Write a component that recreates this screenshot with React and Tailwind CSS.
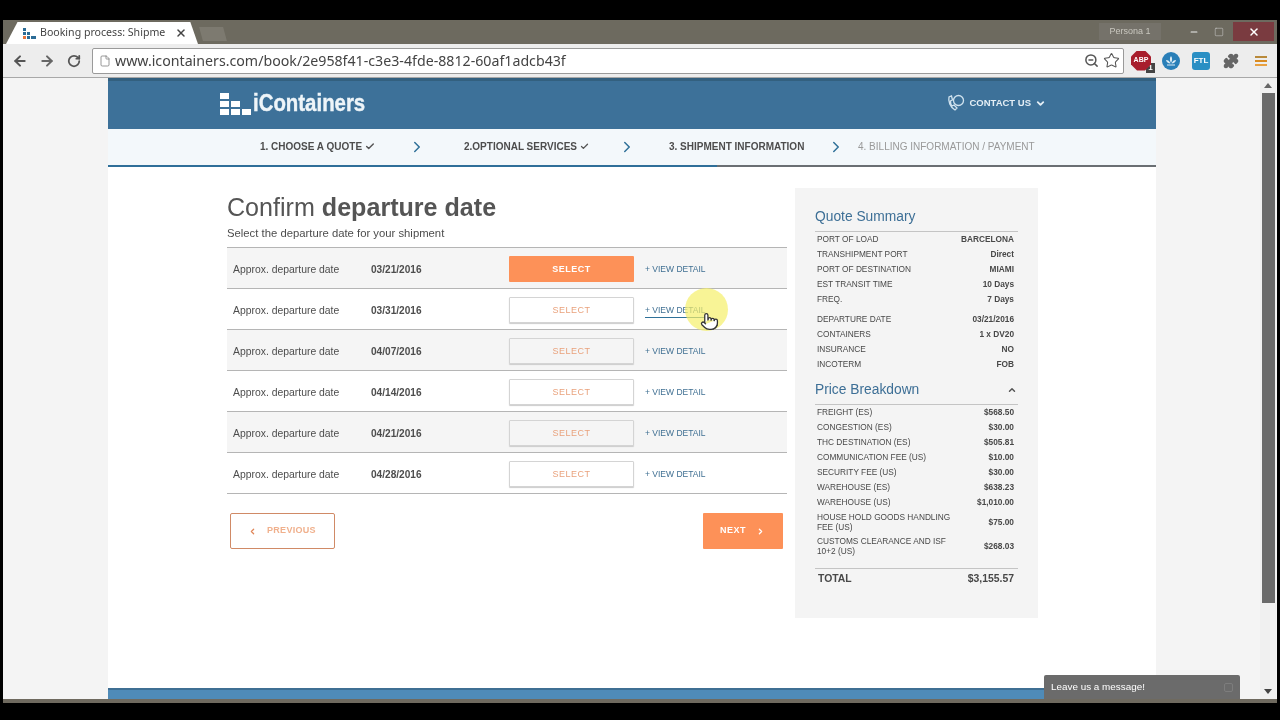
import React from "react";
import { ArrowLeft, ArrowRight, RotateCw, File, ZoomOut, Star, Check, ChevronRight, ChevronLeft, ChevronDown, ChevronUp, Pointer, Puzzle, X, Minus, Square } from "lucide-react";

const dates = ["03/21/2016", "03/31/2016", "04/07/2016", "04/14/2016", "04/21/2016", "04/28/2016"];
const summaryA = [["PORT OF LOAD", "BARCELONA"], ["TRANSHIPMENT PORT", "Direct"], ["PORT OF DESTINATION", "MIAMI"], ["EST TRANSIT TIME", "10 Days"], ["FREQ.", "7 Days"]];
const summaryB = [["DEPARTURE DATE", "03/21/2016"], ["CONTAINERS", "1 x DV20"], ["INSURANCE", "NO"], ["INCOTERM", "FOB"]];
const prices = [["FREIGHT (ES)", "$568.50"], ["CONGESTION (ES)", "$30.00"], ["THC DESTINATION (ES)", "$505.81"], ["COMMUNICATION FEE (US)", "$10.00"], ["SECURITY FEE (US)", "$30.00"], ["WAREHOUSE (ES)", "$638.23"], ["WAREHOUSE (US)", "$1,010.00"]];

function SumRow({ a, b }) {
  return (
    <div className="flex h-[15px] items-center justify-between pl-[2px] pr-[2px] text-[8.3px] text-[#484848]">
      <span>{a}</span>
      <span className="font-bold">{b}</span>
    </div>
  );
}

function Logo() {
  return (
    <div className="flex items-end gap-[2px]">
      <svg width="31" height="22" viewBox="0 0 31 22" fill="#fff">
        <rect x="0" y="0" width="9" height="6" />
        <rect x="0" y="8" width="9" height="6" />
        <rect x="11" y="8" width="9" height="6" />
        <rect x="0" y="16" width="9" height="6" />
        <rect x="11" y="16" width="9" height="6" />
        <rect x="22" y="16" width="9" height="6" />
      </svg>
      <span className="origin-left scale-x-[0.85] text-[24px] leading-[24px] font-bold text-[#eef5f9] [-webkit-text-stroke:0.4px_#eef5f9]">iContainers</span>
    </div>
  );
}

function Step({ children, cls }) {
  return <div className={`flex items-center gap-[3px] whitespace-nowrap text-[10px] ${cls}`}>{children}</div>;
}

function Tick() {
  return <Check size={13} strokeWidth={3.5} className="text-[#555]" />;
}

function Sep({ cls }) {
  return <ChevronRight size={18} strokeWidth={2} className={`text-[#2f7199] ${cls}`} />;
}

function Row({ date, i }) {
  const odd = i % 2 === 0;
  const active = i === 0;
  const hovered = i === 1;
  return (
    <div className={`flex h-[41px] items-center border-t border-[#b5b5b5] pl-[6px] pt-[4px] text-[10.4px] ${odd ? "bg-[#f5f5f5]" : "bg-white"}`}>
      <span className="w-[138px] text-[#4d4d4d]">Approx. departure date</span>
      <span className="w-[138px] text-[10.1px] font-bold text-[#4d4d4d]">{date}</span>
      <button className={`flex h-[26px] w-[125px] -translate-y-px items-center justify-center rounded-[1px] pt-[2px] text-[9px] tracking-[0.5px] ${active ? "bg-[#fd9158] font-bold text-[#fff]" : "border border-[#d4d4d4] text-[#e9a27c] shadow-[0_1px_1px_#ccc]"} ${!active && odd ? "bg-[#f5f5f5]" : ""} ${!active && !odd ? "bg-white" : ""}`}>SELECT</button>
      <span className={`ml-[11px] pb-[1px] text-[8.5px] text-[#3f6f92] ${hovered ? "border-b border-[#2f7199]" : ""}`}>+ VIEW DETAIL</span>
    </div>
  );
}

export default function App() {
  return (
    <div className="relative flex h-[720px] w-[1280px] flex-col overflow-hidden bg-black [font-family:'Liberation_Sans',Arial,sans-serif] blur-[0.3px]">
      <div className="h-[20px] shrink-0" />
      {/* tab strip */}
      <div className="mx-[3px] flex h-[24px] shrink-0 items-end bg-[#6d6a5f] pr-[3px]">
        <div className="ml-[3px] flex h-[22px] w-[192px] items-center bg-white pl-[17px] text-[10.6px] text-[#444] [clip-path:polygon(0_100%,6%_0,96%_0,100%_100%)] [font-family:'Noto_Sans',sans-serif]">
          <svg width="14" height="12" viewBox="0 0 14 12" className="shrink-0">
            <rect x="0" y="1" width="3" height="3" fill="#2c6c96" />
            <rect x="0" y="5" width="3" height="3" fill="#2c6c96" />
            <rect x="0" y="9" width="3" height="3" fill="#e8733a" />
            <rect x="4" y="5" width="3" height="3" fill="#2c6c96" />
            <rect x="4" y="9" width="3" height="3" fill="#2c6c96" />
            <rect x="8" y="9" width="5" height="3" fill="#2c6c96" />
          </svg>
          <span className="ml-[3px] w-[135px] whitespace-nowrap">Booking process: Shipme</span>
          <X size={12} strokeWidth={3} className="shrink-0 text-[#444]" />
        </div>
        <div className="mb-[3px] ml-[3px] h-[14px] w-[24px] skew-x-[15deg] bg-[#7d7a70]" />
        <div className="mb-[3px] ml-auto flex h-[19px] items-center">
          <span className="mr-[28px] flex h-[17px] w-[62px] items-center justify-center bg-[#75726a] text-[9px] text-[#c9c7bf]">Persona 1</span>
          <Minus size={10} strokeWidth={2.5} className="mr-[15px] text-[#eee]" />
          <Square size={10} strokeWidth={1.2} className="mr-[9px] text-[#d5d5d5]" />
          <div className="flex h-[19px] w-[41px] items-center justify-center bg-[#7a3b40]">
            <X size={12} strokeWidth={3} className="text-white" />
          </div>
        </div>
      </div>
      {/* toolbar */}
      <div className="mx-[3px] flex h-[34px] shrink-0 items-center bg-[#ededed] border-b border-[#a8a8a8] pl-[9px] text-[#555]">
        <ArrowLeft size={16} strokeWidth={3} />
        <ArrowRight size={16} strokeWidth={3} className="ml-[11px] text-[#666]" />
        <RotateCw size={14} strokeWidth={3} className="ml-[12px]" />
        <div className="ml-[11px] flex h-[26px] w-[1032px] items-center rounded-[2px] border border-[#9a9a9a] bg-white pl-[6px] pr-[3px]">
          <File size={12} strokeWidth={1.5} className="text-[#777]" />
          <span className="ml-[4px] text-[14.2px] text-[#444] [font-family:'Noto_Sans',sans-serif]">www.icontainers.com/book/2e958f41-c3e3-4fde-8812-60af1adcb43f</span>
          <ZoomOut size={15} strokeWidth={2.4} className="ml-auto text-[#555]" />
          <Star size={17} strokeWidth={1.5} className="ml-[4px] text-[#555]" />
        </div>
        <div className="relative ml-[7px] flex h-[20px] w-[20px] items-center justify-center bg-[#a81e2d] text-[7px] font-bold text-white [clip-path:polygon(30%_0,70%_0,100%_30%,100%_70%,70%_100%,30%_100%,0_70%,0_30%)]">
          ABP
        </div>
        <span className="-ml-[5px] mt-[15px] flex h-[10px] w-[9px] items-center justify-center bg-[#444] text-[8px] font-bold text-white">1</span>
        <div className="ml-[7px] flex h-[18px] w-[18px] items-center justify-center rounded-full bg-[#2a7fb8]">
          <svg width="12" height="12" viewBox="0 0 12 12" fill="#dcecf5">
            <path d="M6 1c1.500 2 1.500 4 0 7-1.500-3-1.500-5 0-7zM1 5c2 0 3.500 1 4.500 3.500C3 8.500 1.500 7 1 5zM11 5c-2 0-3.500 1-4.500 3.500C9 8.500 10.500 7 11 5zM2 9.500h8v1H2z" />
          </svg>
        </div>
        <div className="ml-[12px] flex h-[18px] w-[18px] items-center justify-center rounded-[3px] bg-[#2a8fc4] text-[8px] font-bold text-white">FTL</div>
        <Puzzle size={16} strokeWidth={2} className="ml-[13px] fill-[#666] text-[#666]" />
        <div className="ml-[16px] flex w-[12px] flex-col gap-[2px]">
          <div className="h-[2px] bg-[#b98a3a]" />
          <div className="h-[2px] bg-[#d98b22]" />
          <div className="h-[2px] bg-[#e8a040]" />
        </div>
      </div>
      {/* viewport */}
      <div className="mx-[3px] flex h-[621px] shrink-0 bg-[#f4f4f4]">
        <div className="w-[105px] shrink-0" />
        <div className="flex w-[1048px] shrink-0 flex-col bg-white">
          <div className="flex h-[51px] shrink-0 items-center justify-between border-t-[3px] border-[#33607f] bg-[#3d7199] pb-[4px] pl-[112px] pr-[110px]">
            <Logo />
            <div className="flex items-center gap-[4px] text-[9.5px] font-bold text-[#e4eef5]">
              <svg width="18" height="18" viewBox="0 0 18 18" fill="none" stroke="#cfe2ee" strokeWidth="1.3">
                <path d="M2 3c-1 4 1 10 6 13l2-2-3-3-2 1c-1-1-1.500-3-1.500-5l2-1-1-4z" />
                <circle cx="11.500" cy="6.500" r="5" />
              </svg>
              <span>CONTACT US</span>
              <ChevronDown size={11} strokeWidth={4} />
            </div>
          </div>
          <div className="flex h-[36px] shrink-0 items-center bg-[#f3f8fb] pb-[1px] pl-[152px] font-bold">
            <Step cls="w-[115px] text-[#4d4d4d]">1. CHOOSE A QUOTE <Tick /></Step>
            <Sep cls="ml-[33px]" />
            <Step cls="ml-[38px] w-[125px] text-[#4d4d4d]">2.OPTIONAL SERVICES <Tick /></Step>
            <Sep cls="ml-[29px]" />
            <Step cls="ml-[33px] w-[134px] text-[#4d4d4d]">3. SHIPMENT INFORMATION</Step>
            <Sep cls="ml-[24px]" />
            <Step cls="ml-[13px] font-normal text-[#999]">4. BILLING INFORMATION / PAYMENT</Step>
          </div>
          <div className="flex h-[2px] shrink-0">
            <div className="w-[609px] bg-[#2f6f99]" />
            <div className="flex-1 bg-[#6a6f73]" />
          </div>
          <div className="flex min-h-0 flex-1 pl-[119px]">
            <div className="w-[560px] shrink-0 pt-[25px]">
              <h1 className="h-[30px] text-[25.1px] leading-[30px] text-[#555]">Confirm <b>departure date</b></h1>
              <p className="mt-[4px] h-[14px] text-[11.3px] leading-[14px] text-[#4d4d4d]">Select the departure date for your shipment</p>
              <div className="mt-[7px] border-b border-[#b5b5b5]">
                {dates.map((d, i) => <Row key={d} date={d} i={i} />)}
              </div>
              <div className="mt-[19px] flex justify-between pl-[3px] pr-[4px]">
                <button className="flex h-[36px] w-[105px] items-center rounded-[2px] border border-[#d08a66] bg-white pl-[17px] text-[9px] font-bold tracking-[0.3px] text-[#f0b08c]">
                  <ChevronLeft size={9} strokeWidth={3.5} className="text-[#e0875a]" />
                  <span className="ml-[10px]">PREVIOUS</span>
                </button>
                <button className="flex h-[36px] w-[80px] items-center rounded-[1px] bg-[#fd9158] pl-[17px] text-[9px] font-bold tracking-[0.5px] text-white">
                  <span>NEXT</span>
                  <ChevronRight size={9} strokeWidth={3.5} className="ml-[10px]" />
                </button>
              </div>
            </div>
            <aside className="ml-[8px] mt-[21px] h-[430px] w-[243px] shrink-0 bg-[#f4f4f4] px-[20px] pt-[20px]">
              <h2 className="h-[18px] text-[13.8px] leading-[18px] text-[#3d6f96]">Quote Summary</h2>
              <div className="mt-[5px] border-t border-[#c4c4c4] pr-[2px]">
                {summaryA.map(([a, b]) => <SumRow key={a} a={a} b={b} />)}
              </div>
              <div className="mt-[5px] pr-[2px]">
                {summaryB.map(([a, b]) => <SumRow key={a} a={a} b={b} />)}
              </div>
              <div className="mt-[9px] flex h-[18px] items-center justify-between text-[#3d6f96]">
                <h2 className="text-[13.8px] leading-[18px]">Price Breakdown</h2>
                <ChevronUp size={10} strokeWidth={3.5} className="mr-[1px] text-[#555]" />
              </div>
              <div className="mt-[5px] border-t border-[#c4c4c4] pr-[2px]">
                {prices.map(([a, b]) => <SumRow key={a} a={a} b={b} />)}
                <div className="flex h-[24px] items-center justify-between pl-[2px] pr-[2px] text-[8.3px] leading-[10px] text-[#484848]">
                  <span className="w-[140px]">HOUSE HOLD GOODS HANDLING FEE (US)</span>
                  <span className="font-bold">$75.00</span>
                </div>
                <div className="flex h-[24px] items-center justify-between pl-[2px] pr-[2px] text-[8.3px] leading-[10px] text-[#484848]">
                  <span className="w-[140px]">CUSTOMS CLEARANCE AND ISF 10+2 (US)</span>
                  <span className="font-bold">$268.03</span>
                </div>
              </div>
              <div className="mt-[10px] flex h-[18px] items-center justify-between border-t border-[#c4c4c4] pl-[3px] pr-[4px] pt-[2px] text-[10.4px] font-bold text-[#484848]">
                <span>TOTAL</span>
                <span>$3,155.57</span>
              </div>
            </aside>
          </div>
          <div className="mt-auto h-[11px] shrink-0 border-t-[2px] border-[#3f6f93] bg-[#4f8bb8]" />
        </div>
        <div className="w-[104px] shrink-0" />
        <div className="flex w-[16px] shrink-0 flex-col items-center bg-[#f0f0f0]">
          <div className="mt-[5px] h-0 w-0 border-x-[4px] border-b-[5px] border-x-transparent border-b-[#666]" />
          <div className="mt-[5px] h-[510px] w-[13px] bg-[#6a6a6a]" />
          <div className="mb-[5px] mt-auto h-0 w-0 border-x-[4px] border-t-[5px] border-x-transparent border-t-[#444]" />
        </div>
      </div>
      {/* bottom strip */}
      <div className="mx-[3px] h-[4px] shrink-0 bg-[#6f6a5f]" />
      {/* overlays */}
      <div className="absolute left-[685px] top-[288px] h-[43px] w-[43px] rounded-full bg-[#f5f06a]/70" />
      <Pointer size={19} strokeWidth={1.6} className="absolute left-[700px] top-[312px] fill-white text-[#333]" />
      <div className="absolute left-[1044px] top-[675px] flex h-[24px] w-[196px] items-center justify-between rounded-t-[2px] bg-[#6b6b6b] pl-[7px] pr-[7px] text-[9.9px] text-white">
        <span>Leave us a message!</span>
        <div className="h-[9px] w-[9px] rounded-[2px] border border-[#7d7d7d]" />
      </div>
    </div>
  );
}
